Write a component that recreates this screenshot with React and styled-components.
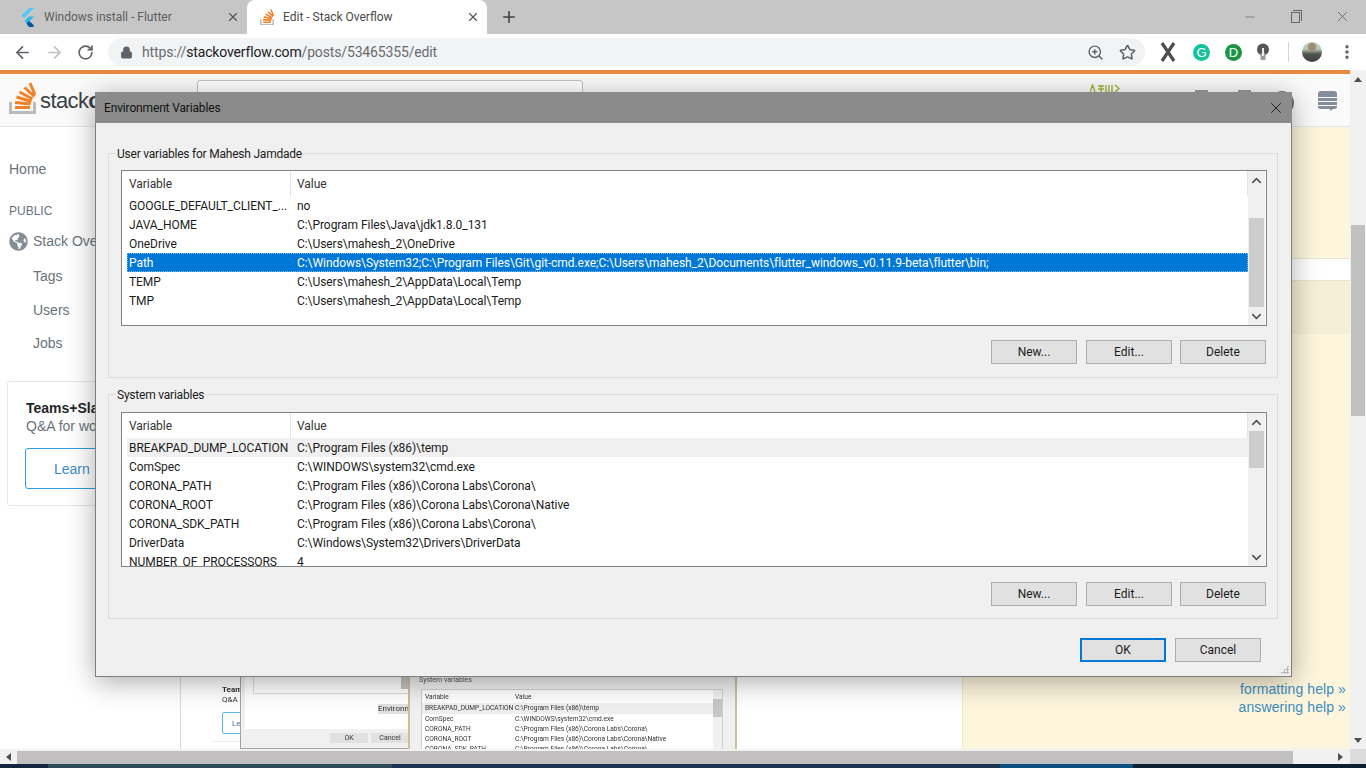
import React from "react";
import styled, { createGlobalStyle } from "styled-components";
import {
  ArrowLeft,
  ArrowRight,
  ChevronDown,
  ChevronUp,
  EllipsisVertical,
  Lock,
  Minus,
  Plus,
  RotateCw,
  Star,
  X,
  ZoomIn,
} from "lucide-react";
import { FaGlobeAmericas } from "react-icons/fa";

const UI_FONT = `Roboto, "Noto Sans", sans-serif`;
const WEB_FONT = `"Liberation Sans", Arial, sans-serif`;

const USER_VARS = [
  ["GOOGLE_DEFAULT_CLIENT_...", "no"],
  ["JAVA_HOME", "C:\\Program Files\\Java\\jdk1.8.0_131"],
  ["OneDrive", "C:\\Users\\mahesh_2\\OneDrive"],
  [
    "Path",
    "C:\\Windows\\System32;C:\\Program Files\\Git\\git-cmd.exe;C:\\Users\\mahesh_2\\Documents\\flutter_windows_v0.11.9-beta\\flutter\\bin;",
  ],
  ["TEMP", "C:\\Users\\mahesh_2\\AppData\\Local\\Temp"],
  ["TMP", "C:\\Users\\mahesh_2\\AppData\\Local\\Temp"],
];

const SYSTEM_VARS = [
  ["BREAKPAD_DUMP_LOCATION", "C:\\Program Files (x86)\\temp"],
  ["ComSpec", "C:\\WINDOWS\\system32\\cmd.exe"],
  ["CORONA_PATH", "C:\\Program Files (x86)\\Corona Labs\\Corona\\"],
  ["CORONA_ROOT", "C:\\Program Files (x86)\\Corona Labs\\Corona\\Native"],
  ["CORONA_SDK_PATH", "C:\\Program Files (x86)\\Corona Labs\\Corona\\"],
  ["DriverData", "C:\\Windows\\System32\\Drivers\\DriverData"],
  ["NUMBER_OF_PROCESSORS", "4"],
];

const GlobalStyle = createGlobalStyle`
  html, body {
    margin: 0;
    padding: 0;
    background: #fff;
    overflow: hidden;
  }
  * {
    box-sizing: border-box;
  }
`;

const FlutterIcon = () => (
  <svg width="15" height="19" viewBox="0 0 15 19">
    <path d="M9 0h5L4 10 1.500 7.500z" fill="#54c5f8" />
    <path d="M9 8.500h5l-4.500 4.500 4.500 4.500H9L4.500 13z" fill="#29b6f6" />
    <path d="M6.500 15.500 9 13l5 4.500-1 1.500H9z" fill="#01579b" />
  </svg>
);

const StackIcon = ({ width }) => (
  <svg width={width} height={(width * 32) / 27} viewBox="0 0 27 32">
    <path d="M0 20v12h27V20h-3v9H3v-9z" fill="#bcbbbb" />
    <path
      d="M6 25.500h15M6 20.500l15.500 1.500M7.500 15l15 4.500M10.500 10l13 7M15.500 5.500l10 9M21 1l5 12"
      stroke="#f48024"
      strokeWidth="3"
      fill="none"
    />
  </svg>
);

const ExtensionX = () => (
  <svg width="16" height="20" viewBox="0 0 16 20">
    <path d="M2 1l12 18M14 1L2 19" stroke="#4e4e4e" strokeWidth="3.200" fill="none" />
  </svg>
);

const Bulb = () => (
  <svg width="14" height="18" viewBox="0 0 14 18">
    <circle cx="7" cy="6.500" r="6" fill="#555" />
    <rect x="4.500" y="10" width="5" height="7" rx="1" fill="#9a9a9a" />
    <rect x="6" y="5" width="2" height="8" fill="#e8e8e8" />
  </svg>
);

const ChatIcon = () => (
  <svg width="19" height="20" viewBox="0 0 19 20">
    <path d="M0 7h19v3H0zM0 11h19v3H0z" fill="#848d9b" />
    <path d="M3 0h13a3 3 0 0 1 3 3v3H0V3a3 3 0 0 1 3-3z" fill="#848d9b" />
    <path d="M0 15h19v.5a2.500 2.500 0 0 1-2.500 2.500H15l-3 2v-2H2.500A2.500 2.500 0 0 1 0 15.500z" fill="#848d9b" />
  </svg>
);

const Arrow = ({ dir }) => <ArrowGlyph $dir={dir} />;

const VarList = ({ rows, height, thumbTop, thumbHeight, selected, inactive }) => (
  <ListBox $height={height}>
    <ListBody>
      <HeadRow>
        <HeadCell $first>Variable</HeadCell>
        <HeadCell>Value</HeadCell>
      </HeadRow>
      {rows.map(([name, value]) => (
        <VarRow key={name} $selected={name === selected} $inactive={name === inactive}>
          <NameCell>{name}</NameCell>
          <ValueCell>{value}</ValueCell>
        </VarRow>
      ))}
    </ListBody>
    <ListTrack>
      <TrackArrow>
        <ChevronUp size={15} strokeWidth={2.4} />
      </TrackArrow>
      <ListThumb $top={thumbTop} $height={thumbHeight} />
      <TrackArrow $end>
        <ChevronDown size={15} strokeWidth={2.4} />
      </TrackArrow>
    </ListTrack>
  </ListBox>
);

const VarGroup = ({ title, listTop, buttonGap, ...list }) => (
  <Group>
    <GroupLabel $after={listTop}>{title}</GroupLabel>
    <VarList {...list} />
    <ButtonRow $top={buttonGap}>
      <DialogButton>New...</DialogButton>
      <DialogButton>Edit...</DialogButton>
      <DialogButton>Delete</DialogButton>
    </ButtonRow>
  </Group>
);

export default function App() {
  return (
    <Screen>
      <GlobalStyle />
      <TabStrip>
        <Tab>
          <FlutterIcon />
          <TabTitle>Windows install - Flutter</TabTitle>
          <X size={14} color="#555" />
        </Tab>
        <Tab $active>
          <StackIcon width={14} />
          <TabTitle>Edit - Stack Overflow</TabTitle>
          <X size={14} color="#555" />
        </Tab>
        <NewTab>
          <Plus size={18} strokeWidth={2.2} color="#444" />
        </NewTab>
        <WindowControls>
          <Minus size={14} strokeWidth={1} color="#555" />
          <RestoreIcon />
          <X size={17} strokeWidth={1} color="#555" />
        </WindowControls>
      </TabStrip>

      <Toolbar>
        <NavIcons>
          <ArrowLeft size={19} color="#5f6368" strokeWidth={2.2} />
          <ArrowRight size={19} color="#bfc2c5" strokeWidth={2.2} />
          <RotateCw size={17} color="#5f6368" strokeWidth={2.4} />
        </NavIcons>
        <Omnibox>
          <Lock size={13} color="#5f6368" fill="#5f6368" />
          <Url>
            https://<b>stackoverflow.com</b>/posts/53465355/edit
          </Url>
          <OmniIcons>
            <ZoomIn size={17} color="#5f6368" />
            <Star size={17} color="#5f6368" strokeWidth={2.2} />
          </OmniIcons>
        </Omnibox>
        <Extensions>
          <ExtensionX />
          <BadgeIcon $color="#15c39a" $gap={15}>G</BadgeIcon>
          <BadgeIcon $color="#1c9443" $gap={14}>D</BadgeIcon>
          <Bulb />
          <ToolbarDivider />
          <Avatar />
          <EllipsisVertical size={18} color="#5f6368" strokeWidth={2.6} />
        </Extensions>
      </Toolbar>

      <Viewport>
        <WebPage>
          <SiteHeader>
            <Logo>
              <StackIcon width={27} />
              <LogoText>
                stack<b>overflow</b>
              </LogoText>
            </Logo>
            <SearchBox />
            <HeaderRight>
              <Promo>
                <svg width="30" height="8" viewBox="0 0 30 8">
                  <path
                    d="M0 8l2.500-7L5 8M8 2h6M8 5h6M11 1v7M16 1v7M19 1v7M22 1v7M25 1l4 3.500-4 3.500"
                    stroke="#a6b53c"
                    strokeWidth="1.400"
                    fill="none"
                  />
                </svg>
              </Promo>
              <HeaderTab $gap={30} />
              <HeaderTab $gap={19} />
              <HeaderDot />
              <ChatSlot>
                <ChatIcon />
              </ChatSlot>
            </HeaderRight>
          </SiteHeader>

          <PageBody>
            <Sidebar>
              <NavItem>Home</NavItem>
              <NavHeading>PUBLIC</NavHeading>
              <NavGlobe>
                <FaGlobeAmericas size={19} color="#848d95" />
                Stack Overflow
              </NavGlobe>
              <NavSub $top={16}>Tags</NavSub>
              <NavSub $top={16}>Users</NavSub>
              <NavSub $top={15}>Jobs</NavSub>
              <TeamsCard>
                <TeamsTitle>Teams+Slack</TeamsTitle>
                <TeamsText>Q&amp;A for work</TeamsText>
                <LearnButton>Learn More</LearnButton>
              </TeamsCard>
            </Sidebar>

            <MainColumn>
              <Shot>
                <ShotSide>
                  <b>Team</b>
                  <span>Q&amp;A for</span>
                  <ShotLearn>Learn</ShotLearn>
                </ShotSide>
                <ShotWindow>
                  <ShotPanel>
                    <ShotBox />
                    <ShotSmallButton>Environment</ShotSmallButton>
                  </ShotPanel>
                  <ShotFooter>
                    <ShotOk>OK</ShotOk>
                    <ShotOk>Cancel</ShotOk>
                  </ShotFooter>
                </ShotWindow>
                <ShotDialog>
                  <ShotLegend>System variables</ShotLegend>
                  <ShotList>
                    <ShotRows>
                      <ShotRow>
                        <span>Variable</span>
                        <span>Value</span>
                      </ShotRow>
                      {SYSTEM_VARS.slice(0, 5).map(([name, value]) => (
                        <ShotRow key={name} $inactive={name === "BREAKPAD_DUMP_LOCATION"}>
                          <span>{name}</span>
                          <span>{value}</span>
                        </ShotRow>
                      ))}
                    </ShotRows>
                    <ShotScroll>
                      <ShotThumb />
                    </ShotScroll>
                  </ShotList>
                </ShotDialog>
              </Shot>
            </MainColumn>

            <HelpAside>
              <AsideBand $height={131} />
              <AsideBand $height={23} $color="#fff" $lined />
              <AsideBand $height={53} $color="#f5efd7" />
              <HelpLinks>
                <a>formatting help »</a>
                <a>answering help »</a>
              </HelpLinks>
            </HelpAside>
          </PageBody>
        </WebPage>
        <PageScroll>
          <Arrow dir="up" />
          <PageThumb />
          <Arrow dir="down" />
        </PageScroll>
      </Viewport>

      <BottomScroll>
        <Arrow dir="left" />
        <BottomThumb />
        <Arrow dir="right" />
        <ScrollCorner />
      </BottomScroll>
      <TaskbarEdge />

      <Dialog>
        <TitleBar>
          <span>Environment Variables</span>
          <X size={18} strokeWidth={1.1} color="#111" />
        </TitleBar>
        <DialogBody>
          <VarGroup
            title="User variables for Mahesh Jamdade"
            listTop={7}
            buttonGap={14}
            rows={USER_VARS}
            height={156}
            thumbTop={29}
            thumbHeight={89}
            selected="Path"
          />
          <VarGroup
            title="System variables"
            listTop={8}
            buttonGap={15}
            rows={SYSTEM_VARS}
            height={155}
            thumbTop={0}
            thumbHeight={37}
            inactive="BREAKPAD_DUMP_LOCATION"
          />
          <DialogFooter>
            <DialogButton $primary>OK</DialogButton>
            <DialogButton>Cancel</DialogButton>
          </DialogFooter>
          <ResizeGrip />
        </DialogBody>
      </Dialog>
    </Screen>
  );
}

const Screen = styled.div`
  position: relative;
  display: flex;
  flex-direction: column;
  width: 1366px;
  height: 768px;
  overflow: hidden;
  font-family: ${WEB_FONT};
`;

const TabStrip = styled.div`
  display: flex;
  align-items: stretch;
  height: 34px;
  flex: none;
  padding-left: 7px;
  background: #c6c6c6;
`;

const Tab = styled.div`
  display: flex;
  align-items: center;
  width: 240px;
  padding: 0 7px 0 13px;
  border-radius: 8px 8px 0 0;
  background: ${({ $active }) => ($active ? "#fff" : "transparent")};
  color: ${({ $active }) => ($active ? "#4a4a4a" : "#5d5d5d")};
  svg:first-child {
    flex: none;
  }
`;

const TabTitle = styled.span`
  flex: 1;
  padding-left: 9px;
  font-family: ${UI_FONT};
  font-size: 12px;
`;

const NewTab = styled.div`
  display: flex;
  align-items: center;
  padding-left: 13px;
`;

const WindowControls = styled.div`
  display: flex;
  align-items: center;
  gap: 34px;
  margin-left: auto;
  padding: 0 15px 1px 0;
`;

const RestoreIcon = styled.span`
  position: relative;
  width: 9px;
  height: 11px;
  margin-top: 1px;
  border: 1px solid #666;
  &::after {
    content: "";
    position: absolute;
    top: -3px;
    right: -3px;
    width: 8px;
    height: 10px;
    border-top: 1px solid #666;
    border-right: 1px solid #666;
  }
`;

const Toolbar = styled.div`
  display: flex;
  align-items: center;
  height: 36px;
  flex: none;
  background: #fff;
`;

const NavIcons = styled.div`
  display: flex;
  align-items: center;
  gap: 13px;
  width: 108px;
  padding-left: 13px;
`;

const Omnibox = styled.div`
  display: flex;
  align-items: center;
  width: 1037px;
  height: 28px;
  padding: 0 9px 0 12px;
  border-radius: 14px;
  background: #f1f3f4;
`;

const Url = styled.div`
  padding-left: 9px;
  font-family: ${UI_FONT};
  font-size: 14px;
  letter-spacing: -0.15px;
  color: #686c70;
  b {
    font-weight: 400;
    color: #202124;
  }
`;

const OmniIcons = styled.div`
  display: flex;
  align-items: center;
  gap: 15px;
  margin-left: auto;
`;

const Extensions = styled.div`
  display: flex;
  align-items: center;
  flex: 1;
  padding-left: 15px;
`;

const BadgeIcon = styled.span`
  display: flex;
  align-items: center;
  justify-content: center;
  width: 17px;
  height: 17px;
  margin-left: 17px;
  margin-right: ${({ $gap }) => $gap}px;
  border-radius: 50%;
  background: ${({ $color }) => $color};
  color: #fff;
  font-family: ${WEB_FONT};
  font-size: 13px;
  & + & {
    margin-left: 0;
  }
`;

const ToolbarDivider = styled.span`
  width: 1px;
  height: 20px;
  margin: 0 13px 0 18px;
  background: #d5d5d5;
`;

const Avatar = styled.span`
  width: 20px;
  height: 20px;
  margin-right: 16px;
  border-radius: 50%;
  background: radial-gradient(circle at 50% 25%, #a08c74 0 22%, transparent 24%),
    linear-gradient(#b8c9b4 0 35%, #4f5650 60%, #3c403c);
`;

const Viewport = styled.div`
  display: flex;
  flex: 1;
  min-height: 0;
`;

const WebPage = styled.div`
  display: flex;
  flex-direction: column;
  width: 1350px;
  border-top: 4px solid #ea8a3c;
`;

const SiteHeader = styled.header`
  display: flex;
  height: 53px;
  flex: none;
  padding-left: 9px;
  border-bottom: 1px solid #e4e6e8;
  background: #fafafb;
`;

const Logo = styled.div`
  display: flex;
  align-items: flex-start;
  width: 188px;
  padding-top: 8px;
  overflow: hidden;
`;

const LogoText = styled.span`
  margin: 6px 0 0 4px;
  font-size: 22px;
  line-height: 26px;
  letter-spacing: -0.6px;
  color: #3b4045;
  white-space: nowrap;
  b {
    font-weight: 700;
  }
`;

const SearchBox = styled.div`
  width: 386px;
  height: 30px;
  margin-top: 6px;
  border: 1px solid #bbc0c4;
  border-radius: 3px;
  background: #fff;
`;

const HeaderRight = styled.div`
  display: flex;
  align-items: flex-start;
  margin-left: 507px;
`;

const Promo = styled.div`
  width: 105px;
  padding-top: 10px;
  line-height: 0;
  svg {
    display: block;
  }
`;

const HeaderTab = styled.span`
  width: 13px;
  height: 2px;
  margin-top: 16px;
  margin-right: ${({ $gap }) => $gap}px;
  background: #9a9a9a;
`;

const HeaderDot = styled.span`
  width: 24px;
  height: 24px;
  margin-top: 17px;
  margin-right: 24px;
  border-radius: 50%;
  background: #6a737c;
`;

const ChatSlot = styled.div`
  margin-top: 17px;
  line-height: 0;
`;

const PageBody = styled.div`
  display: flex;
  flex: 1;
  min-height: 0;
`;

const Sidebar = styled.nav`
  display: flex;
  flex-direction: column;
  width: 181px;
  padding: 33px 0 0 9px;
  border-right: 1px solid #d6d9dc;
  color: #6a737c;
  font-size: 14px;
  line-height: 18px;
`;

const NavItem = styled.div``;

const NavHeading = styled.div`
  margin-top: 25px;
  font-size: 12px;
  line-height: 16px;
`;

const NavGlobe = styled.div`
  display: flex;
  align-items: center;
  gap: 5px;
  height: 20px;
  margin-top: 12px;
  white-space: nowrap;
`;

const NavSub = styled.div`
  margin-top: ${({ $top }) => $top}px;
  padding-left: 24px;
`;

const TeamsCard = styled.div`
  display: flex;
  flex-direction: column;
  width: 165px;
  height: 125px;
  margin: 29px 0 0 -2px;
  padding: 17px 18px 0;
  border: 1px solid #e4e6e8;
  border-radius: 3px;
`;

const TeamsTitle = styled.b`
  color: #242729;
  font-size: 14px;
  white-space: nowrap;
`;

const TeamsText = styled.span`
  color: #6a737c;
  font-size: 14px;
  white-space: nowrap;
`;

const LearnButton = styled.div`
  display: flex;
  align-items: center;
  width: 128px;
  height: 41px;
  margin: 13px 0 0 -1px;
  padding-left: 28px;
  border: 1px solid #2f9fe0;
  border-radius: 3px;
  color: #3d8cc8;
  white-space: nowrap;
  word-spacing: 5px;
`;

const MainColumn = styled.main`
  width: 781px;
  padding: 533px 0 0 31px;
  overflow: hidden;
`;

const Shot = styled.div`
  display: flex;
  width: 525px;
  height: 90px;
  overflow: hidden;
  filter: blur(0.3px);
  font-family: ${UI_FONT};
  font-size: 8px;
  color: #333;
`;

const ShotSide = styled.div`
  display: flex;
  flex-direction: column;
  width: 28px;
  height: 82px;
  flex: none;
  padding: 25px 0 0 10px;
  border-bottom: 1px solid #eceded;
  line-height: 10px;
  white-space: nowrap;
  overflow: hidden;
`;

const ShotLearn = styled.span`
  width: 30px;
  height: 22px;
  margin-top: 7px;
  padding: 6px 0 0 9px;
  flex: none;
  border: 1px solid #5fb3e3;
  border-radius: 2px;
  color: #55708f;
`;

const ShotWindow = styled.div`
  display: flex;
  flex-direction: column;
  width: 170px;
  height: 89px;
  flex: none;
  padding: 0 0 0 4px;
  border: 1px solid #a3a3a3;
  background: #f0f0f0;
`;

const ShotPanel = styled.div`
  display: flex;
  flex-direction: column;
  align-items: flex-end;
  height: 68px;
  padding-left: 8px;
  background: #fff;
`;

const ShotBox = styled.div`
  align-self: stretch;
  height: 33px;
  border-left: 1px solid #dcdcdc;
  border-bottom: 1px solid #dcdcdc;
  background: linear-gradient(to left, #c4c4c4 8px, #fff 8px);
  background-size: 100% 28px;
  background-repeat: no-repeat;
`;

const ShotSmallButton = styled.div`
  width: 31px;
  height: 10px;
  margin-top: 10px;
  overflow: hidden;
  background: #e1e1e1;
  line-height: 10px;
  white-space: nowrap;
`;

const ShotFooter = styled.div`
  display: flex;
  justify-content: flex-end;
  gap: 3px;
  padding-top: 4px;
`;

const ShotOk = styled.div`
  width: 38px;
  height: 10px;
  background: #e1e1e1;
  font-size: 7px;
  line-height: 10px;
  text-align: center;
`;

const ShotDialog = styled.div`
  display: flex;
  flex-direction: column;
  width: 329px;
  margin-left: -2px;
  flex: none;
  padding: 15px 12px 0 9px;
  border-left: 2px solid #cdbf96;
  border-right: 2px solid #cdbf96;
  background: #f0f0f0;
`;

const ShotLegend = styled.div`
  line-height: 10px;
  font-size: 7px;
  color: #555;
`;

const ShotList = styled.div`
  display: flex;
  height: 80px;
  margin: 4px 0 0 2px;
  background: #fff;
  border: 1px solid #d0d0d0;
`;

const ShotRows = styled.div`
  flex: 1;
  min-width: 0;
  padding-top: 2px;
`;

const ShotRow = styled.div`
  display: grid;
  grid-template-columns: 90px 1fr;
  height: 10.3px;
  padding-left: 3px;
  background: ${({ $inactive }) => ($inactive ? "#eee" : "transparent")};
  font-size: 6.6px;
  line-height: 10px;
  white-space: nowrap;
  &:first-child {
    margin-bottom: 1px;
  }
`;

const ShotScroll = styled.div`
  width: 9px;
  padding-top: 9px;
  background: #f0f0f0;
`;

const ShotThumb = styled.div`
  height: 18px;
  background: #c6c6c6;
`;

const HelpAside = styled.aside`
  display: flex;
  flex-direction: column;
  flex: 1;
  background: #fdf6dd;
  border-left: 1px solid #eee8cf;
`;

const AsideBand = styled.div`
  height: ${({ $height }) => $height}px;
  flex: none;
  background: ${({ $color }) => $color || "transparent"};
  ${({ $lined }) => $lined && "border-top: 1px solid #ebe5c9; border-bottom: 1px solid #ebe5c9;"}
`;

const HelpLinks = styled.div`
  display: flex;
  flex-direction: column;
  align-items: flex-end;
  margin-top: auto;
  padding: 0 4px 33px 0;
  color: #3c8dbf;
  font-size: 14px;
  letter-spacing: 0.1px;
  line-height: 18px;
`;

const PageScroll = styled.div`
  display: flex;
  flex-direction: column;
  align-items: center;
  justify-content: space-between;
  flex: 1;
  padding: 7px 0 6px;
  background: #f1f1f1;
  position: relative;
`;

const PageThumb = styled.div`
  position: absolute;
  top: 155px;
  left: 1px;
  width: 14px;
  height: 191px;
  background: #c1c1c1;
`;

const ArrowGlyph = styled.span`
  width: 0;
  height: 0;
  flex: none;
  border: 4px solid transparent;
  ${({ $dir }) => {
    if ($dir === "up") return "border-bottom: 5px solid #505050; border-top: 0;";
    if ($dir === "down") return "border-top: 5px solid #505050; border-bottom: 0;";
    if ($dir === "left") return "border-right: 5px solid #505050; border-left: 0;";
    return "border-left: 5px solid #505050; border-right: 0;";
  }}
`;

const BottomScroll = styled.div`
  display: flex;
  align-items: center;
  height: 15px;
  flex: none;
  padding-left: 6px;
  background: #f1f1f1;
`;

const BottomThumb = styled.div`
  width: 1276px;
  height: 13px;
  margin: 2px 45px 0 6px;
  background: #c1bfbf;
`;

const ScrollCorner = styled.div`
  width: 16px;
  height: 15px;
  margin-left: auto;
  background: #dcdcdc;
`;

const TaskbarEdge = styled.div`
  height: 4px;
  flex: none;
  background: linear-gradient(
    to right,
    #14263f 0 48px,
    #2d4a5a 48px 392px,
    #1a3350 392px 1000px,
    #0c4f80 1000px 1133px,
    #0e1f33 1133px
  );
`;

const Dialog = styled.section`
  position: absolute;
  top: 92px;
  left: 95px;
  display: flex;
  flex-direction: column;
  width: 1197px;
  height: 585px;
  border: 1px solid #7e7e7e;
  border-top: 0;
  background: #f0f0f0;
  box-shadow: 0 5px 26px rgba(0, 0, 0, 0.33);
  font-family: ${UI_FONT};
  font-size: 12px;
  letter-spacing: -0.06px;
  color: #1c1c1c;
`;

const TitleBar = styled.div`
  display: flex;
  align-items: center;
  justify-content: space-between;
  height: 31px;
  flex: none;
  margin: 0 -1px;
  padding: 0 7px 0 9px;
  background: #8b8b8b;
  color: #111;
  letter-spacing: -0.15px;
`;

const DialogBody = styled.div`
  position: relative;
  display: flex;
  flex-direction: column;
  gap: 16px;
  flex: 1;
  padding: 30px 13px 0 12px;
`;

const Group = styled.div`
  display: flex;
  flex-direction: column;
  height: 225px;
  padding: 0 10px 0 12px;
  border: 1px solid #dcdcdc;
`;

const GroupLabel = styled.div`
  align-self: flex-start;
  height: 18px;
  margin: -9px 0 ${({ $after }) => $after}px -5px;
  padding: 0 1px;
  background: #f0f0f0;
  letter-spacing: -0.22px;
  line-height: 18px;
`;

const ListBox = styled.div`
  display: flex;
  height: ${({ $height }) => $height}px;
  flex: none;
  border: 1px solid #828282;
  background: #fff;
`;

const ListBody = styled.div`
  flex: 1;
  min-width: 0;
  padding-left: 5px;
  overflow: hidden;
`;

const HeadRow = styled.div`
  display: grid;
  grid-template-columns: 164px 1fr;
  height: 25px;
  border-right: 1px solid #e5e5e5;
`;

const HeadCell = styled.div`
  padding-left: ${({ $first }) => ($first ? "2px" : "6px")};
  border-right: ${({ $first }) => ($first ? "1px solid #e5e5e5" : "0")};
  line-height: 26px;
  color: #333;
`;

const VarRow = styled.div`
  display: grid;
  grid-template-columns: 164px 1fr;
  height: 19px;
  line-height: 20px;
  white-space: nowrap;
  background: ${({ $selected, $inactive }) => {
    if ($selected) return "#0078d7";
    return $inactive ? "#f0f0f0" : "transparent";
  }};
  color: ${({ $selected }) => ($selected ? "#fff" : "inherit")};
  outline: ${({ $selected }) => ($selected ? "1px dotted #7fb6e6" : "0")};
  outline-offset: -1px;
`;

const NameCell = styled.span`
  padding-left: 2px;
  overflow: hidden;
`;

const ValueCell = styled.span`
  padding-left: 6px;
`;

const ListTrack = styled.div`
  display: flex;
  flex-direction: column;
  width: 17px;
  flex: none;
  margin-right: 1px;
  background: #f0f0f0;
`;

const TrackArrow = styled.div`
  display: flex;
  align-items: center;
  justify-content: center;
  height: 18px;
  flex: none;
  margin-top: ${({ $end }) => ($end ? "auto" : "0")};
  color: #505050;
`;

const ListThumb = styled.div`
  height: ${({ $height }) => $height}px;
  margin: ${({ $top }) => $top}px 1px 0;
  background: #cdcdcd;
`;

const ButtonRow = styled.div`
  display: flex;
  justify-content: flex-end;
  gap: 8px;
  margin-top: ${({ $top }) => $top}px;
  padding-right: 1px;
  button:first-child {
    margin-right: 1px;
  }
`;

const DialogButton = styled.button`
  width: 86px;
  height: 24px;
  padding: 0;
  border: ${({ $primary }) => ($primary ? "2px solid #0078d7" : "1px solid #adadad")};
  border-radius: 0;
  background: #e1e1e1;
  font-family: ${UI_FONT};
  font-size: 12px;
  color: #1c1c1c;
`;

const DialogFooter = styled.div`
  display: flex;
  justify-content: flex-end;
  gap: 9px;
  margin-top: 3px;
  padding-right: 17px;
`;

const ResizeGrip = styled.span`
  position: absolute;
  right: 2px;
  bottom: 2px;
  width: 9px;
  height: 9px;
  background: radial-gradient(circle, #b5b5b5 1px, transparent 1.2px) 0 0 / 3px 3px;
  clip-path: polygon(100% 0, 100% 100%, 0 100%);
`;
